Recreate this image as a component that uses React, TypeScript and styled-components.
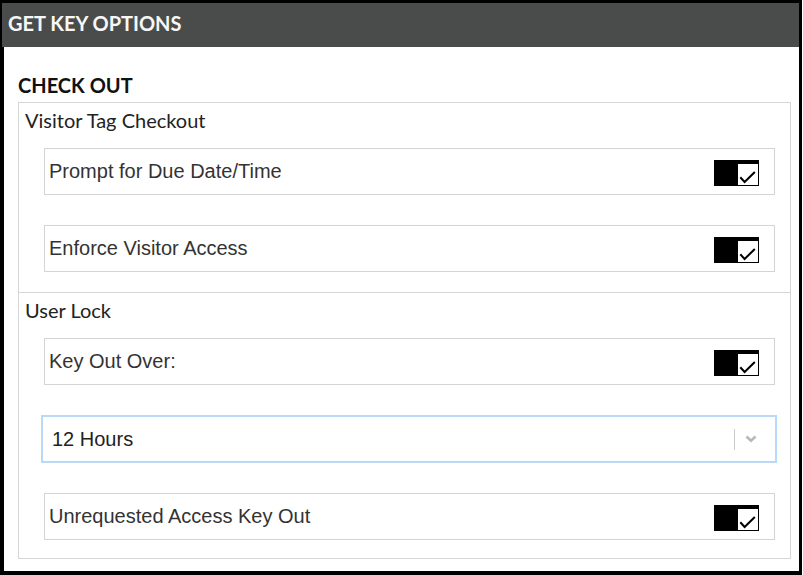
import React from 'react'
import styled, { createGlobalStyle } from 'styled-components'

const GlobalStyle = createGlobalStyle`
	html, body {
		margin: 0;
		padding: 0;
		background: #ffffff;
	}
	* {
		box-sizing: border-box;
	}
`

interface Option {
	label: string
	checked: boolean
}

const visitorOptions: Option[] = [
	{ label: 'Prompt for Due Date/Time', checked: true },
	{ label: 'Enforce Visitor Access', checked: true },
]

export default function App() {
	return (
		<>
			<GlobalStyle />
			<Frame>
				<Header>GET KEY OPTIONS</Header>
				<Content>
					<Title>CHECK OUT</Title>
					<Section>
						<SectionTitle>Visitor Tag Checkout</SectionTitle>
						<Items>
							{visitorOptions.map(o => (
								<OptionRow key={o.label} label={o.label} checked={o.checked} />
							))}
						</Items>
					</Section>
					<Section>
						<SectionTitle>User Lock</SectionTitle>
						<Items>
							<OptionRow label="Key Out Over:" checked />
							<Select>
								<SelectValue>12 Hours</SelectValue>
								<Separator />
								<Chevron>
									<svg width="12" height="8" viewBox="0 0 12 8">
										<path
											d="M1.5 1.5 L6 5.8 L10.5 1.5"
											fill="none"
											stroke="#b8b8b8"
											strokeWidth="2.6"
										/>
									</svg>
								</Chevron>
							</Select>
							<OptionRow label="Unrequested Access Key Out" checked />
						</Items>
					</Section>
				</Content>
			</Frame>
		</>
	)
}

function OptionRow({ label, checked }: { label: string; checked: boolean }) {
	return (
		<Row>
			<RowLabel>{label}</RowLabel>
			<Toggle>
				<CheckBox>
					{checked && (
						<svg width="20" height="21" viewBox="0 0 20 21">
							<path
								d="M2.3 13.3 L6.6 18 L16.8 8"
								fill="none"
								stroke="#000"
								strokeWidth="2"
							/>
						</svg>
					)}
				</CheckBox>
			</Toggle>
		</Row>
	)
}

const Frame = styled.div`
	width: 802px;
	height: 575px;
	border-style: solid;
	border-color: #000;
	border-width: 3px 3px 4px 4px;
	display: flex;
	flex-direction: column;
	background: #fff;
`

const Header = styled.div`
	height: 44px;
	line-height: 40px;
	padding: 0 0 4px 6px;
	margin-left: -2px;
	background: #4a4c4b;
	color: #f7f7f7;
	font-family: Lato, 'Liberation Sans', sans-serif;
	font-weight: 700;
	font-size: 20px;
`

const Content = styled.div`
	padding: 26px 8px 0 14px;
`

const Title = styled.div`
	font-family: Lato, 'Liberation Sans', sans-serif;
	font-weight: 700;
	font-size: 20px;
	line-height: 24px;
	color: #111;
	margin-bottom: 5px;
`

const Section = styled.div`
	border: 1px solid #d6d6d6;
	padding: 5px 15px 20px 5px;

	& + & {
		border-top: none;
		padding-bottom: 18px;
	}
`

const SectionTitle = styled.div`
	font-family: Lato, 'Liberation Sans', sans-serif;
	font-size: 20px;
	line-height: 24px;
	color: #222;
	margin-left: 1px;
	margin-bottom: 16px;
`

const Items = styled.div`
	margin-left: 20px;
	display: flex;
	flex-direction: column;
	gap: 30px;
`

const Row = styled.div`
	height: 47px;
	border: 1px solid #d4d4d4;
	display: flex;
	align-items: center;
	justify-content: space-between;
	padding: 0 15px 0 4px;
`

const RowLabel = styled.span`
	font-family: 'Liberation Sans', Arial, sans-serif;
	font-size: 20px;
	color: #333;
`

const Toggle = styled.div`
	width: 45px;
	height: 26px;
	background: #000;
	display: flex;
	justify-content: flex-end;
	align-items: flex-end;
	padding: 0 1px 1px 0;
	margin-top: 2px;
`

const CheckBox = styled.div`
	width: 20px;
	height: 21px;
	background: #fff;
	display: flex;

	svg {
		display: block;
	}
`

const Select = styled.div`
	height: 48px;
	margin: 0 -2px 0 -3px;
	border: 2px solid #b9d9f6;
	display: flex;
	align-items: center;
	padding-left: 9px;
`

const SelectValue = styled.span`
	flex: 1;
	font-family: 'Liberation Sans', Arial, sans-serif;
	font-size: 20px;
	color: #222;
`

const Separator = styled.span`
	width: 1px;
	height: 21px;
	background: #cccccc;
`

const Chevron = styled.span`
	display: flex;
	padding: 0 18px 0 10px;

	svg {
		display: block;
	}
`
